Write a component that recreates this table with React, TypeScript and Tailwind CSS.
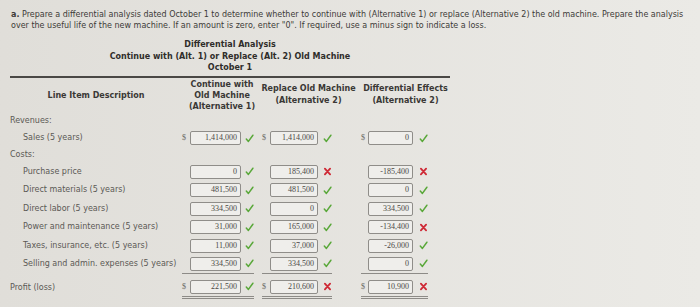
import React from "react";

type Mark = "ok" | "bad";

interface Cell {
  value: string;
  mark: Mark;
}

interface Row {
  label: string;
  cells: [Cell, Cell, Cell];
}

const costRows: Row[] = [
  {
    label: "Purchase price",
    cells: [
      { value: "0", mark: "ok" },
      { value: "185,400", mark: "bad" },
      { value: "-185,400", mark: "bad" },
    ],
  },
  {
    label: "Direct materials (5 years)",
    cells: [
      { value: "481,500", mark: "ok" },
      { value: "481,500", mark: "ok" },
      { value: "0", mark: "ok" },
    ],
  },
  {
    label: "Direct labor (5 years)",
    cells: [
      { value: "334,500", mark: "ok" },
      { value: "0", mark: "ok" },
      { value: "334,500", mark: "ok" },
    ],
  },
  {
    label: "Power and maintenance (5 years)",
    cells: [
      { value: "31,000", mark: "ok" },
      { value: "165,000", mark: "ok" },
      { value: "-134,400", mark: "bad" },
    ],
  },
  {
    label: "Taxes, insurance, etc. (5 years)",
    cells: [
      { value: "11,000", mark: "ok" },
      { value: "37,000", mark: "ok" },
      { value: "-26,000", mark: "ok" },
    ],
  },
  {
    label: "Selling and admin. expenses (5 years)",
    cells: [
      { value: "334,500", mark: "ok" },
      { value: "334,500", mark: "ok" },
      { value: "0", mark: "ok" },
    ],
  },
];

// column geometry: outer width, "$" slot, input width, gap before mark
const cols = [
  { outer: "w-[80px]", dollar: "w-[8px]", input: "w-[51px]", gap: "ml-[4px]" },
  { outer: "w-[99px]", dollar: "w-[8px]", input: "w-[48px]", gap: "ml-[5px]" },
  { outer: "w-[89px]", dollar: "w-[7px]", input: "w-[45px]", gap: "ml-[6px]" },
];

const sans = "font-['DejaVu_Sans',Verdana,sans-serif]";

const Check = () => (
  <svg width="9" height="9" viewBox="0 0 9 9" className="shrink-0">
    <path d="M1.3 5 L3.4 7.4 L7.9 1.2" fill="none" stroke="#5aa83a" strokeWidth="1.5" strokeLinecap="round" strokeLinejoin="round" />
  </svg>
);

const Cross = () => (
  <svg width="9" height="9" viewBox="0 0 9 9" className="shrink-0">
    <path d="M1.9 1.6 L7.1 7.4 M7.1 1.6 L1.9 7.4" fill="none" stroke="#cf2a36" strokeWidth="1.8" strokeLinecap="round" />
  </svg>
);

const AmountCell: React.FC<{ col: number; cell: Cell; dollar?: boolean; line?: "single" | "double" }> = ({
  col,
  cell,
  dollar,
  line,
}) => {
  const c = cols[col];
  const border =
    line === "single"
      ? "border-b border-[#8d8b87]"
      : line === "double"
      ? "border-b-[3px] border-double border-[#8d8b87] pt-[4px]"
      : "";
  return (
    <div className={`${c.outer} flex h-full`}>
      <div className={`flex items-center h-full ${border}`}>
        <span className={`${c.dollar} text-[8px] text-[#6a6864] font-['Liberation_Serif',serif]`}>
          {dollar ? "$" : ""}
        </span>
        <div
          className={`${c.input} h-[14px] border border-[#8f8d89] rounded-[2px] bg-[#efeeeb] flex items-center justify-end pr-[3px] text-[8px] leading-none text-[#4a4845] font-['Liberation_Serif',serif]`}
        >
          {cell.value}
        </div>
        <span className={`${c.gap} w-[9px] flex`}>{cell.mark === "ok" ? <Check /> : <Cross />}</span>
      </div>
    </div>
  );
};

export default function App() {
  return (
    <div className={`w-[700px] h-[307px] overflow-hidden bg-gradient-to-r from-[#e0ded9] to-[#ebeae6] ${sans}`}>
      <div className="pl-[11px] pt-[9px] text-[8px] leading-[11px] text-[#3d3b38] whitespace-nowrap">
        <p>
          <span className="font-bold">a.</span> Prepare a differential analysis dated October 1 to determine whether to
          continue with (Alternative 1) or replace (Alternative 2) the old machine. Prepare the analysis
        </p>
        <p>
          over the useful life of the new machine. If an amount is zero, enter "0". If required, use a minus sign to
          indicate a loss.
        </p>
      </div>

      <div className="ml-[10px] w-[440px] mt-[8px]">
        <div className="border-b-2 border-[#4a4845] pb-[2px] flex flex-col items-center text-[8px] leading-[11.5px] font-bold text-[#2f2d2a]">
          <div>Differential Analysis</div>
          <div>Continue with (Alt. 1) or Replace (Alt. 2) Old Machine</div>
          <div>October 1</div>
        </div>

        {/* column headings */}
        <div className="flex items-center h-[35px] text-[8px] leading-[11px] font-bold text-[#3a3835]">
          <div className="w-[172px] flex justify-center whitespace-nowrap">Line Item Description</div>
          <div className="w-[80px] flex flex-col items-center whitespace-nowrap">
            <span>Continue with</span>
            <span>Old Machine</span>
            <span>(Alternative 1)</span>
          </div>
          <div className="w-[99px] pr-[6px] flex flex-col items-center whitespace-nowrap leading-[12px]">
            <span>Replace Old Machine</span>
            <span>(Alternative 2)</span>
          </div>
          <div className="w-[89px] flex flex-col items-center whitespace-nowrap leading-[12px]">
            <span>Differential Effects</span>
            <span>(Alternative 2)</span>
          </div>
        </div>

        <div className="text-[8px] text-[#5b5955]">
          <div className="h-[16px] flex items-center">Revenues:</div>
          <div className="h-[19px] flex items-center">
            <div className="w-[172px] pl-[13px]">Sales (5 years)</div>
            <AmountCell col={0} dollar cell={{ value: "1,414,000", mark: "ok" }} />
            <AmountCell col={1} dollar cell={{ value: "1,414,000", mark: "ok" }} />
            <AmountCell col={2} dollar cell={{ value: "0", mark: "ok" }} />
          </div>
          <div className="h-[15px] flex items-center">Costs:</div>
          {costRows.map((row, idx) => (
            <div key={idx} className="h-[18.5px] flex items-center">
              <div className="w-[172px] pl-[13px] whitespace-nowrap">{row.label}</div>
              {row.cells.map((cell, ci) => (
                <AmountCell
                  key={ci}
                  col={ci}
                  cell={cell}
                  line={idx === costRows.length - 1 ? "single" : undefined}
                />
              ))}
            </div>
          ))}
          <div className="h-[25px] flex items-center">
            <div className="w-[172px] pt-[4px]">Profit (loss)</div>
            <AmountCell col={0} dollar cell={{ value: "221,500", mark: "ok" }} line="double" />
            <AmountCell col={1} dollar cell={{ value: "210,600", mark: "bad" }} line="double" />
            <AmountCell col={2} dollar cell={{ value: "10,900", mark: "bad" }} line="double" />
          </div>
        </div>
      </div>
    </div>
  );
}
